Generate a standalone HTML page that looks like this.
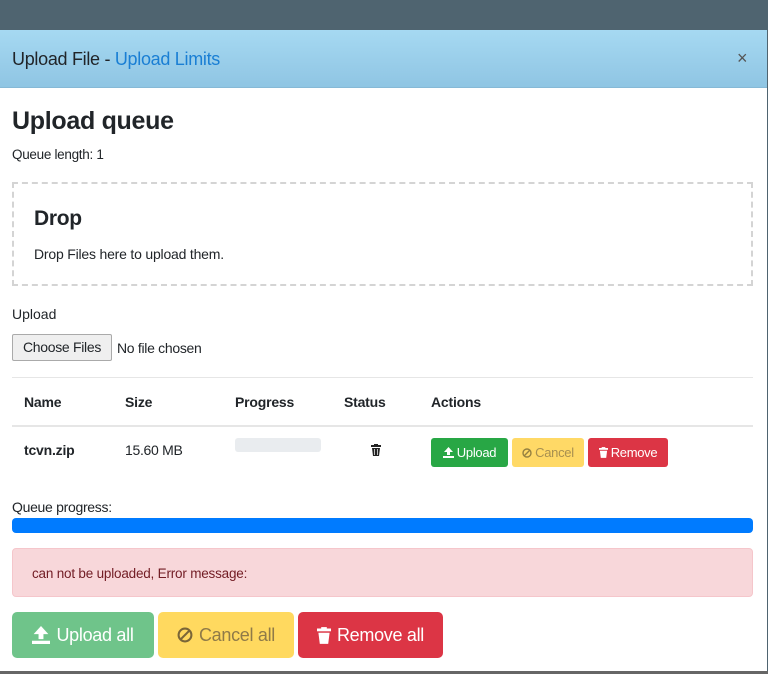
<!DOCTYPE html>
<html><head><meta charset="utf-8"><style>
*{box-sizing:border-box;margin:0;padding:0}
body{width:768px;height:674px;overflow:hidden;background:#4f6470;font-family:"Liberation Sans",sans-serif;color:#212529;position:relative}
.a{position:absolute}
.modal{left:0;top:30px;width:767px;height:642px;background:#fff}
.hdr{left:0;top:30px;width:767px;height:58px;background:linear-gradient(#a6d9f2,#8fc5e3);border-bottom:1px solid #86b9d6}
.btn{position:absolute;border-radius:3px;color:#fff;display:flex;align-items:center;justify-content:center;font-size:13px;letter-spacing:-0.3px}
svg{display:inline-block}
</style></head><body>
<div class="a modal"></div>
<div class="a hdr"></div>
<div class="a" style="left:12px;top:49px;font-size:18px;letter-spacing:-0.3px">Upload File - <span style="color:#1a7fd4">Upload Limits</span></div>
<div class="a" style="left:737px;top:48px;font-size:18px;color:#555">×</div>
<div class="a" style="left:12px;top:107px;font-size:25px;font-weight:bold;letter-spacing:-0.3px">Upload queue</div>
<div class="a" style="left:12px;top:147px;font-size:13.5px;letter-spacing:-0.3px">Queue length: 1</div>
<div class="a" style="left:12px;top:182px;width:741px;height:104px;border:2px dashed #d4d4d4"></div>
<div class="a" style="left:34px;top:207px;font-size:21px;font-weight:bold;letter-spacing:-0.3px">Drop</div>
<div class="a" style="left:34px;top:246px;font-size:14px;letter-spacing:-0.2px">Drop Files here to upload them.</div>
<div class="a" style="left:12px;top:306px;font-size:14px">Upload</div>
<div class="a" style="left:12px;top:334px;width:100px;height:27px;background:#efefef;border:1px solid #aaa;border-radius:2px;font-size:14px;text-align:center;line-height:25px;letter-spacing:-0.3px">Choose Files</div>
<div class="a" style="left:117px;top:340px;font-size:14px;letter-spacing:-0.3px">No file chosen</div>
<div class="a" style="left:12px;top:377px;width:741px;height:1px;background:#e6e6e6"></div>
<div class="a" style="top:394px;left:24px;font-size:14px;font-weight:bold;letter-spacing:-0.2px">Name</div>
<div class="a" style="top:394px;left:125px;font-size:14px;font-weight:bold;letter-spacing:-0.2px">Size</div>
<div class="a" style="top:394px;left:235px;font-size:14px;font-weight:bold;letter-spacing:-0.2px">Progress</div>
<div class="a" style="top:394px;left:344px;font-size:14px;font-weight:bold;letter-spacing:-0.2px">Status</div>
<div class="a" style="top:394px;left:431px;font-size:14px;font-weight:bold;letter-spacing:-0.2px">Actions</div>
<div class="a" style="left:12px;top:425px;width:741px;height:2px;background:#e6e6e6"></div>
<div class="a" style="top:442px;left:24px;font-size:14px;font-weight:bold;letter-spacing:-0.2px">tcvn.zip</div>
<div class="a" style="top:442px;left:125px;font-size:14px;letter-spacing:-0.3px">15.60 MB</div>
<div class="a" style="left:235px;top:438px;width:86px;height:14px;background:#e9ecef;border-radius:3px"></div>
<div class="a" style="left:371px;top:443px"><svg width="10" height="12" viewBox="0 0 10 12"><rect x="0" y="1" width="10" height="2" fill="#222"/><rect x="3" y="0" width="4" height="2" fill="#222"/><path d="M1 4h8l-1 8H2z" fill="#222"/><path d="M3.5 5v6M6.5 5v6" stroke="#fff" stroke-width=".7"/></svg></div>
<div class="btn" style="left:431px;top:438px;width:77px;height:29px;background:#28a745"><svg width="11" height="11" viewBox="0 0 11 11" style="margin-right:3px"><path d="M5.5 0L1 5h3v3h3V5h3z" fill="#fff"/><rect x="0" y="9" width="11" height="2" fill="#fff"/></svg>Upload</div>
<div class="btn" style="left:512px;top:438px;width:72px;height:29px;background:#ffd966;color:#a89050"><svg width="10" height="10" viewBox="0 0 10 10" style="margin-right:3px"><circle cx="5" cy="5" r="4" fill="none" stroke="#958040" stroke-width="1.4"/><path d="M2.3 7.7L7.7 2.3" stroke="#958040" stroke-width="1.4"/></svg>Cancel</div>
<div class="btn" style="left:588px;top:438px;width:80px;height:29px;background:#dc3545"><svg width="9" height="11" viewBox="0 0 10 12" style="margin-right:3px"><rect x="0" y="1" width="10" height="2" fill="#fff"/><rect x="3" y="0" width="4" height="2" fill="#fff"/><path d="M1 4h8l-1 8H2z" fill="#fff"/></svg>Remove</div>
<div class="a" style="left:12px;top:499px;font-size:14px;letter-spacing:-0.3px">Queue progress:</div>
<div class="a" style="left:12px;top:518px;width:741px;height:15px;background:#007bff;border-radius:4px"></div>
<div class="a" style="left:12px;top:548px;width:741px;height:49px;background:#f8d7da;border:1px solid #f5c6cb;border-radius:4px"></div>
<div class="a" style="left:32px;top:566px;font-size:13.5px;color:#721c24;letter-spacing:-0.2px">can not be uploaded, Error message:</div>
<div class="btn" style="left:12px;top:612px;width:142px;height:46px;background:#6fc48a;font-size:18px;border-radius:5px"><svg width="18" height="18" viewBox="0 0 11 11" style="margin-right:6px"><path d="M5.5 0L1 5h3v3h3V5h3z" fill="#fff"/><rect x="0" y="9" width="11" height="2" fill="#fff"/></svg>Upload all</div>
<div class="btn" style="left:158px;top:612px;width:136px;height:46px;background:#ffd95f;color:#8f7a48;font-size:18px;border-radius:5px"><svg width="16" height="16" viewBox="0 0 10 10" style="margin-right:6px"><circle cx="5" cy="5" r="4" fill="none" stroke="#7a6638" stroke-width="1.3"/><path d="M2.3 7.7L7.7 2.3" stroke="#7a6638" stroke-width="1.3"/></svg>Cancel all</div>
<div class="btn" style="left:298px;top:612px;width:145px;height:46px;background:#dc3545;font-size:18px;border-radius:5px"><svg width="14" height="17" viewBox="0 0 10 12" style="margin-right:6px"><rect x="0" y="1" width="10" height="2" fill="#fff"/><rect x="3" y="0" width="4" height="2" fill="#fff"/><path d="M1 4h8l-1 8H2z" fill="#fff"/></svg>Remove all</div>
<div class="a" style="left:0;top:671px;width:768px;height:3px;background:#666"></div>
</body></html>
